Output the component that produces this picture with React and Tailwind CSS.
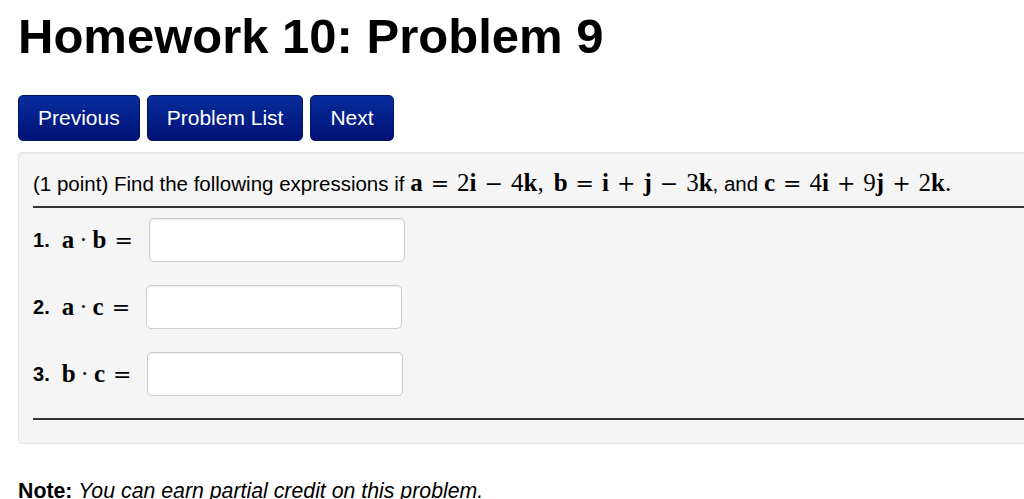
const sans = "font-['Liberation_Sans',Arial,sans-serif]"
const serif = "font-['Liberation_Serif','Times_New_Roman',serif] text-[25px]"

function B({ children }) {
    return <span className="font-bold">{children}</span>
}

function Op({ children }) {
    return <span className="mx-[8px] font-['DejaVu_Serif',serif] text-[22px]">{children}</span>
}

function Answer({ num, left, right }) {
    return (
        <div className="flex items-center h-[44px]">
            <span className="font-bold text-[20px]">{num}.</span>
            <span className={`${serif} ml-[12px] leading-[28px]`}>
                <B>{left}</B>
                <span className="mx-[5px]">·</span>
                <B>{right}</B>
                <Op>=</Op>
            </span>
            <input
                type="text"
                className="ml-[8px] w-[256px] h-[44px] bg-white border border-[#cccccc] rounded-[5px] shadow-[inset_0_1px_1px_rgba(0,0,0,0.075)] outline-none"
            />
        </div>
    )
}

export default function App() {
    return (
        <div className={`${sans} text-black bg-white w-[1024px] h-[499px] overflow-hidden pl-[18px]`}>
            <h1 className="pt-[12px] text-[49px] leading-[49px] font-bold">Homework 10: Problem 9</h1>

            <div className="flex gap-[7px] mt-[34px]">
                {['Previous', 'Problem List', 'Next'].map(label => (
                    <button
                        key={label}
                        className="h-[46px] px-[19px] text-[21px] text-white rounded-[5px] border border-[#001466] bg-gradient-to-b from-[#0a2c9c] to-[#001276]"
                    >
                        {label}
                    </button>
                ))}
            </div>

            <div className="mt-[11px] w-[1030px] bg-[#f5f5f5] border border-[#e3e3e3] rounded-[4px] shadow-[inset_0_1px_1px_rgba(0,0,0,0.05)] px-[14px] pt-[16px] pb-[23px]">
                <div className="text-[20.5px] leading-[28px] pb-[8px] border-b-2 border-[#333]">
                    (1 point) Find the following expressions if{' '}
                    <span className={serif}>
                        <B>a</B><Op>=</Op>2<B>i</B><Op>−</Op>4<B>k</B>,<span className="ml-[10px]" /><B>b</B><Op>=</Op><B>i</B><Op>+</Op><B>j</B><Op>−</Op>3<B>k</B>
                    </span>
                    , and{' '}
                    <span className={serif}>
                        <B>c</B><Op>=</Op>4<B>i</B><Op>+</Op>9<B>j</B><Op>+</Op>2<B>k</B>.
                    </span>
                </div>

                <div className="mt-[10px] flex flex-col gap-[23px]">
                    <Answer num={1} left="a" right="b" />
                    <Answer num={2} left="a" right="c" />
                    <Answer num={3} left="b" right="c" />
                </div>

                <div className="mt-[22px] border-b-2 border-[#333]"></div>
            </div>

            <p className="mt-[33px] text-[21.3px] leading-[28px]">
                <span className="font-bold">Note:</span> <i>You can earn partial credit on this problem.</i>
            </p>
        </div>
    )
}
